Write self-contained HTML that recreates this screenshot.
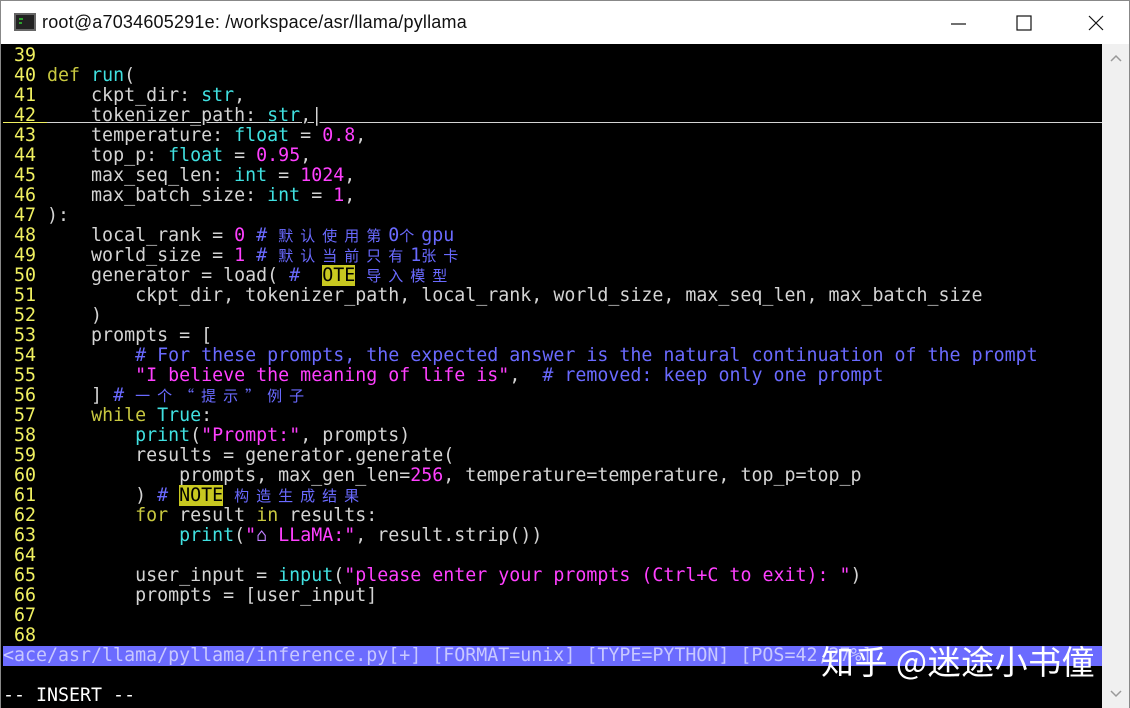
<!DOCTYPE html>
<html><head><meta charset="utf-8"><style>
*{margin:0;padding:0;box-sizing:border-box}
body{width:1130px;height:708px;background:#fff;overflow:hidden;position:relative;font-family:"Liberation Sans",sans-serif}
#title{position:absolute;left:0;top:0;width:1130px;height:44px;background:#fff;border:1px solid #888;border-bottom:none}
#title .t{position:absolute;left:41px;top:11px;font-size:18px;color:#111;letter-spacing:0.2px}
#term{position:absolute;left:0;top:44px;width:1102px;height:664px;background:#000;border-left:1px solid #888}
#sb{position:absolute;left:1102px;top:44px;width:28px;height:664px;background:#f0f0f0;border-right:1px solid #888}
pre{position:absolute;left:2px;top:2px;font-family:"DejaVu Sans Mono","Liberation Mono","Noto Sans CJK SC",monospace;font-size:18.3px;line-height:20px;color:#d4d4d4;white-space:pre}
.n{color:#f0f060}.k{color:#c8c840}.c{color:#40e0e0}.m{color:#ff40ff}.b{color:#6a6aff}.s{color:#ff40ff}
.h{background:#c8c820;color:#000}
.st{background:#6b6bff;color:#c8c8ff;display:inline-block;width:1100px}
.z{font-family:"Noto Sans CJK SC",sans-serif;font-size:15px;letter-spacing:7px}
</style></head><body>
<div id="title">
<svg style="position:absolute;left:13px;top:12px" width="22" height="18"><rect x="0" y="0" width="22" height="18" fill="#666"/><rect x="2" y="2" width="18" height="14" fill="#222"/><path d="M5 6h4M5 10h3" stroke="#3c3" stroke-width="1.5"/></svg>
<div class="t">root@a7034605291e: /workspace/asr/llama/pyllama</div>
<svg style="position:absolute;left:950px;top:14px" width="160" height="18" stroke="#111" stroke-width="1.2" fill="none"><path d="M0 9h15"/><rect x="66" y="1" width="14" height="14"/><path d="M138 1l14 14M152 1l-14 14"/></svg>
</div>
<div id="term"><pre><span class="n"> 39 </span>
<span class="n"> 40 </span><span class="k">def</span> <span class="c">run</span>(
<span class="n"> 41 </span>    ckpt_dir: <span class="c">str</span>,
<span class="n" style="text-decoration:underline"> 42 </span><span style="text-decoration:underline">    tokenizer_path: <span class="c">str</span>,|                                                                           </span>
<span class="n"> 43 </span>    temperature: <span class="c">float</span> = <span class="m">0.8</span>,
<span class="n"> 44 </span>    top_p: <span class="c">float</span> = <span class="m">0.95</span>,
<span class="n"> 45 </span>    max_seq_len: <span class="c">int</span> = <span class="m">1024</span>,
<span class="n"> 46 </span>    max_batch_size: <span class="c">int</span> = <span class="m">1</span>,
<span class="n"> 47 </span>):
<span class="n"> 48 </span>    local_rank = <span class="m">0</span> <span class="b"># <span class="z">默认使用第</span>0<span class="z">个</span>gpu</span>
<span class="n"> 49 </span>    world_size = <span class="m">1</span> <span class="b"># <span class="z">默认当前只有</span>1<span class="z">张卡</span></span>
<span class="n"> 50 </span>    generator = load( <span class="b">#  <span class="h">OTE</span> <span class="z">导入模型</span></span>
<span class="n"> 51 </span>        ckpt_dir, tokenizer_path, local_rank, world_size, max_seq_len, max_batch_size
<span class="n"> 52 </span>    )
<span class="n"> 53 </span>    prompts = [
<span class="n"> 54 </span>        <span class="b"># For these prompts, the expected answer is the natural continuation of the prompt</span>
<span class="n"> 55 </span>        <span class="s">"I believe the meaning of life is"</span>,  <span class="b"># removed: keep only one prompt</span>
<span class="n"> 56 </span>    ] <span class="b"># <span class="z">一个“提示”例子</span></span>
<span class="n"> 57 </span>    <span class="k">while</span> <span class="c">True</span>:
<span class="n"> 58 </span>        <span class="c">print</span>(<span class="s">"Prompt:"</span>, prompts)
<span class="n"> 59 </span>        results = generator.generate(
<span class="n"> 60 </span>            prompts, max_gen_len=<span class="m">256</span>, temperature=temperature, top_p=top_p
<span class="n"> 61 </span>        ) <span class="b"># <span class="h">NOTE</span> <span class="z">构造生成结果</span></span>
<span class="n"> 62 </span>        <span class="k">for</span> result <span class="k">in</span> results:
<span class="n"> 63 </span>            <span class="c">print</span>(<span class="s">"<span style="color:#c080ff">⌂</span> LLaMA:"</span>, result.strip())
<span class="n"> 64 </span>
<span class="n"> 65 </span>        user_input = <span class="c">input</span>(<span class="s">"please enter your prompts (Ctrl+C to exit): "</span>)
<span class="n"> 66 </span>        prompts = [user_input]
<span class="n"> 67 </span>
<span class="n"> 68 </span>
<span class="st">&lt;ace/asr/llama/pyllama/inference.py[+] [FORMAT=unix] [TYPE=PYTHON] [POS=42,27%]</span>

<span style="color:#fff">-- INSERT --</span></pre>
<div style="position:absolute;left:820px;top:592px;font-family:'Noto Sans CJK SC',sans-serif;font-size:33px;color:#fff;white-space:nowrap;letter-spacing:0.5px">知乎 @迷途小书僮</div>
</div>
<div id="sb"><svg style="position:absolute;left:8px;top:10px" width="12" height="8"><path d="M1 7l5-5 5 5" stroke="#999" fill="none" stroke-width="1.5"/></svg><svg style="position:absolute;left:8px;top:646px" width="12" height="8"><path d="M1 1l5 5 5-5" stroke="#999" fill="none" stroke-width="1.5"/></svg></div>
</body></html>
